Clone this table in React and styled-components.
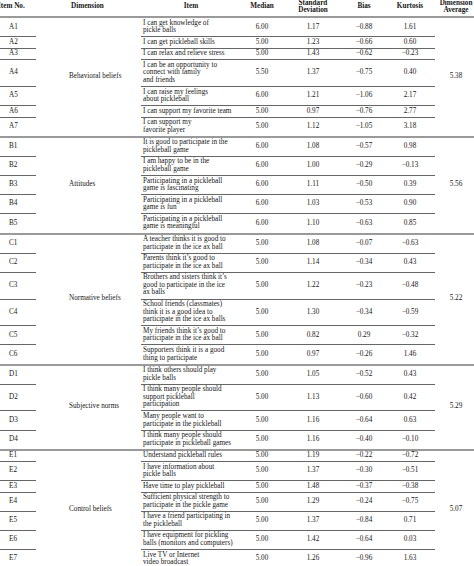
import React from 'react';
import styled, { createGlobalStyle } from 'styled-components';

const GlobalStyle = createGlobalStyle`
  html, body {
    margin: 0;
    padding: 0;
    background: #fff;
    overflow: hidden;
  }
  body {
    font-family: "Liberation Serif", "Times New Roman", serif;
    color: #161616;
  }
`

const COLS = '46px 105px 100px 42px 60px 42px 50px 42px'

const Table = styled.div`
  width: 487px;
  margin: -2px 0 0 -10px;
  font-size: 7.2px;
  line-height: 7.65px;
`

const HeaderRow = styled.div`
  display: grid;
  grid-template-columns: ${COLS};
  border-bottom: 2px solid #9a9a9a;
`

const HeadCell = styled.div`
  display: flex;
  align-items: center;
  justify-content: ${p => (p.$left ? 'flex-start' : 'center')};
  padding: 1.5px 0 1.5px ${p => p.$indent || 0}px;
  min-height: 15.3px;
  font-weight: bold;
  white-space: nowrap;
  text-align: center;
`

const Section = styled.div`
  display: grid;
  grid-template-columns: ${COLS};
  border-bottom: ${p => (p.$last ? 'none' : '2px solid #9a9a9a')};
`

const Cell = styled.div`
  display: flex;
  align-items: center;
  justify-content: ${p => (p.$left ? 'flex-start' : 'center')};
  padding: 1.42px 0 1.42px ${p => p.$indent || 0}px;
  white-space: nowrap;
  border-bottom: ${p => (p.$end ? 'none' : '1px solid #666')};
`

const SpanCell = styled.div`
  grid-column: ${p => p.$col};
  grid-row: 1 / span ${p => p.$rows};
  display: flex;
  align-items: center;
  justify-content: ${p => (p.$left ? 'flex-start' : 'center')};
  padding-left: ${p => p.$indent || 0}px;
  white-space: nowrap;
`

const ItemText = styled.div`
  text-align: inherit;
`

const sections = [
  {
    name: 'Behavioral beliefs',
    avg: '5.38',
    rows: [
      ['A1', ['I can get knowledge of', 'pickle balls'], '6.00', '1.17', '−0.88', '1.61'],
      ['A2', ['I can get pickleball skills'], '5.00', '1.23', '−0.66', '0.60'],
      ['A3', ['I can relax and relieve stress'], '5.00', '1.43', '−0.62', '−0.23'],
      ['A4', ['I can be an opportunity to', 'connect with family', 'and friends'], '5.50', '1.37', '−0.75', '0.40'],
      ['A5', ['I can raise my feelings', 'about pickleball'], '6.00', '1.21', '−1.06', '2.17'],
      ['A6', ['I can support my favorite team'], '5.00', '0.97', '−0.76', '2.77'],
      ['A7', ['I can support my', 'favorite player'], '5.00', '1.12', '−1.05', '3.18'],
    ],
  },
  {
    name: 'Attitudes',
    avg: '5.56',
    rows: [
      ['B1', ['It is good to participate in the', 'pickleball game'], '6.00', '1.08', '−0.57', '0.98'],
      ['B2', ['I am happy to be in the', 'pickleball game'], '6.00', '1.00', '−0.29', '−0.13'],
      ['B3', ['Participating in a pickleball', 'game is fascinating'], '6.00', '1.11', '−0.50', '0.39'],
      ['B4', ['Participating in a pickleball', 'game is fun'], '6.00', '1.03', '−0.53', '0.90'],
      ['B5', ['Participating in a pickleball', 'game is meaningful'], '6.00', '1.10', '−0.63', '0.85'],
    ],
  },
  {
    name: 'Normative beliefs',
    avg: '5.22',
    rows: [
      ['C1', ['A teacher thinks it is good to', 'participate in the ice ax ball'], '5.00', '1.08', '−0.07', '−0.63'],
      ['C2', ['Parents think it’s good to', 'participate in the ice ax ball'], '5.00', '1.14', '−0.34', '0.43'],
      ['C3', ['Brothers and sisters think it’s', 'good to participate in the ice', 'ax balls'], '5.00', '1.22', '−0.23', '−0.48'],
      ['C4', ['School friends (classmates)', 'think it is a good idea to', 'participate in the ice ax balls'], '5.00', '1.30', '−0.34', '−0.59'],
      ['C5', ['My friends think it’s good to', 'participate in the ice ax ball'], '5.00', '0.82', '0.29', '−0.32'],
      ['C6', ['Supporters think it is a good', 'thing to participate'], '5.00', '0.97', '−0.26', '1.46'],
    ],
  },
  {
    name: 'Subjective norms',
    avg: '5.29',
    rows: [
      ['D1', ['I think others should play', 'pickle balls'], '5.00', '1.05', '−0.52', '0.43'],
      ['D2', ['I think many people should', 'support pickleball', 'participation'], '5.00', '1.13', '−0.60', '0.42'],
      ['D3', ['Many people want to', 'participate in the pickleball'], '5.00', '1.16', '−0.64', '0.63'],
      ['D4', ['I think many people should', 'participate in pickleball games'], '5.00', '1.16', '−0.40', '−0.10'],
    ],
  },
  {
    name: 'Control beliefs',
    avg: '5.07',
    rows: [
      ['E1', ['Understand pickleball rules'], '5.00', '1.19', '−0.22', '−0.72'],
      ['E2', ['I have information about', 'pickle balls'], '5.00', '1.37', '−0.30', '−0.51'],
      ['E3', ['Have time to play pickleball'], '5.00', '1.48', '−0.37', '−0.38'],
      ['E4', ['Sufficient physical strength to', 'participate in the pickle game'], '5.00', '1.29', '−0.24', '−0.75'],
      ['E5', ['I have a friend participating in', 'the pickleball'], '5.00', '1.37', '−0.84', '0.71'],
      ['E6', ['I have equipment for pickling', 'balls (monitors and computers)'], '5.00', '1.42', '−0.64', '0.03'],
      ['E7', ['Live TV or Internet', 'video broadcast'], '5.00', '1.26', '−0.96', '1.63'],
    ],
  },
]

const headers = [
  { lines: ['Item No.'], left: true, indent: 8 },
  { lines: ['Dimension'], left: true, indent: 35 },
  { lines: ['Item'] },
  { lines: ['Median'] },
  { lines: ['Standard', 'Deviation'] },
  { lines: ['Bias'] },
  { lines: ['Kurtosis'] },
  { lines: ['Dimension', 'Average'] },
]

const Lines = ({ lines }) => (
  <ItemText>
    {lines.map((l, i) => (
      <React.Fragment key={i}>
        {i > 0 && <br />}
        {l}
      </React.Fragment>
    ))}
  </ItemText>
)

const StatsSection = ({ section, last }) => {
  const n = section.rows.length
  return (
    <Section $last={last}>
      <SpanCell $col={2} $rows={n} $left $indent={33}>{section.name}</SpanCell>
      <SpanCell $col={8} $rows={n}>{section.avg}</SpanCell>
      {section.rows.map(([id, item, median, sd, bias, kurt], i) => {
        const end = i === n - 1
        return (
          <React.Fragment key={id}>
            <Cell $end={end} $left $indent={19}>{id}</Cell>
            <Cell $end={end} $left $indent={2}><Lines lines={item} /></Cell>
            <Cell $end={end}>{median}</Cell>
            <Cell $end={end}>{sd}</Cell>
            <Cell $end={end}>{bias}</Cell>
            <Cell $end={end}>{kurt}</Cell>
          </React.Fragment>
        )
      })}
    </Section>
  )
}

export default function App() {
  return (
    <>
      <GlobalStyle />
      <Table>
        <HeaderRow>
          {headers.map((h, i) => (
            <HeadCell key={i} $left={h.left} $indent={h.indent}><Lines lines={h.lines} /></HeadCell>
          ))}
        </HeaderRow>
        {sections.map((s, i) => (
          <StatsSection key={s.name} section={s} last={i === sections.length - 1} />
        ))}
      </Table>
    </>
  )
}
